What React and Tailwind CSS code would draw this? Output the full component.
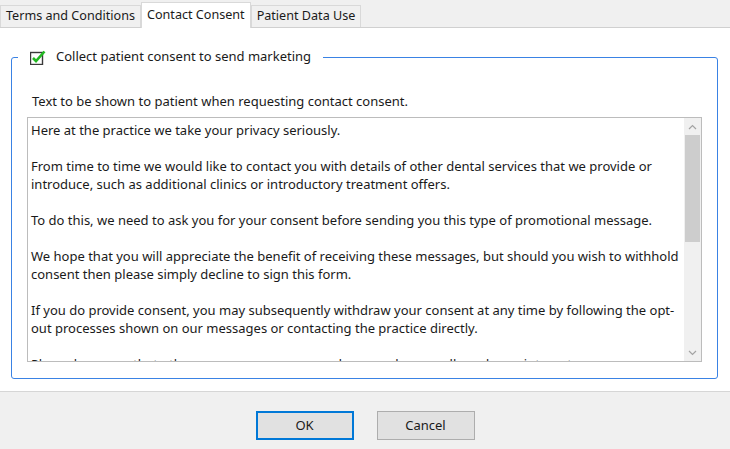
const lines = [
  "Here at the practice we take your privacy seriously.",
  "",
  "From time to time we would like to contact you with details of other dental services that we provide or",
  "introduce, such as additional clinics or introductory treatment offers.",
  "",
  "To do this, we need to ask you for your consent before sending you this type of promotional message.",
  "",
  "We hope that you will appreciate the benefit of receiving these messages, but should you wish to withhold",
  "consent then please simply decline to sign this form.",
  "",
  "If you do provide consent, you may subsequently withdraw your consent at any time by following the opt-",
  "out processes shown on our messages or contacting the practice directly.",
  "",
  "Please be aware that other messages we may send you, such as recalls and appointment",
];

const CheckIcon = () => (
  <svg width="17" height="15" viewBox="0 0 17 15" className="block">
    <rect x="0.5" y="2.5" width="12" height="12" fill="white" stroke="#3a3a3a" strokeWidth="1.4" />
    <path d="M3 8 L6 11 L14.5 1.5" fill="none" stroke="#22b822" strokeWidth="2.6" />
  </svg>
);

const Tab = ({ label, active }) => (
  <div
    className={
      active
        ? "h-[26px] px-[5px] flex items-center bg-white border border-b-0 border-[#d9d9d9] -mb-px relative"
        : "h-[22px] px-[5px] flex items-center bg-[#f0f0f0] border border-b-0 border-[#d9d9d9]"
    }
  >
    {label}
  </div>
);

export default function App() {
  return (
    <div
      className="w-[730px] h-[449px] bg-[#f0f0f0] text-[#1a1a1a] text-[13px] flex flex-col overflow-hidden"
      style={{ fontFamily: '"Noto Sans", "Open Sans", sans-serif' }}
    >
      <div className="h-[28px] flex items-end border-b border-[#d0d0d0] text-[12.6px]">
        <Tab label="Terms and Conditions" />
        <Tab label="Contact Consent" active />
        <Tab label="Patient Data Use" />
      </div>

      <div className="h-[364px] bg-white border-b border-[#d6d6d6] pt-[29px] pl-[11px] pr-[12px]">
        <div className="border border-[#3a82e4] rounded-[3px] h-[322px] px-[15px]">
          <div className="-mt-[10px] -ml-[9px] w-fit bg-white pl-[12px] pr-[12px] flex items-center gap-[9px] h-[18px]">
            <CheckIcon />
            <span>Collect patient consent to send marketing</span>
          </div>
          <div className="mt-[26px] pl-[5px] leading-[18px]">
            Text to be shown to patient when requesting contact consent.
          </div>
          <div className="mt-[7px] h-[245px] border border-[#bcbcbc] flex overflow-hidden">
            <div className="flex-1 min-w-0 pl-[3px] pt-[3px] leading-[18px] whitespace-nowrap overflow-hidden">
              {lines.map((l, i) => (
                <div key={i} className="h-[18px]">
                  {l}
                </div>
              ))}
            </div>
            <div className="w-[17px] shrink-0 bg-[#f0f0f0] flex flex-col">
              <div className="h-[17px] flex items-center justify-center">
                <svg width="9" height="6" viewBox="0 0 9 6">
                  <path d="M1 5 L4.5 1.5 L8 5" fill="none" stroke="#a3a3a3" strokeWidth="1.2" />
                </svg>
              </div>
              <div className="h-[107px] mx-[1px] bg-[#cdcdcd]" />
              <div className="flex-1" />
              <div className="h-[17px] flex items-center justify-center">
                <svg width="9" height="6" viewBox="0 0 9 6">
                  <path d="M1 1 L4.5 4.5 L8 1" fill="none" stroke="#a3a3a3" strokeWidth="1.2" />
                </svg>
              </div>
            </div>
          </div>
        </div>
      </div>

      <div className="flex-1 flex justify-center items-start pt-[19px] gap-[23px]">
        <button className="w-[98px] h-[29px] bg-[#e1e1e1] border border-[#0078d7] shadow-[inset_0_0_0_1px_#0078d7]">
          OK
        </button>
        <button className="w-[98px] h-[29px] bg-[#e1e1e1] border border-[#adadad]">
          Cancel
        </button>
      </div>
    </div>
  );
}
